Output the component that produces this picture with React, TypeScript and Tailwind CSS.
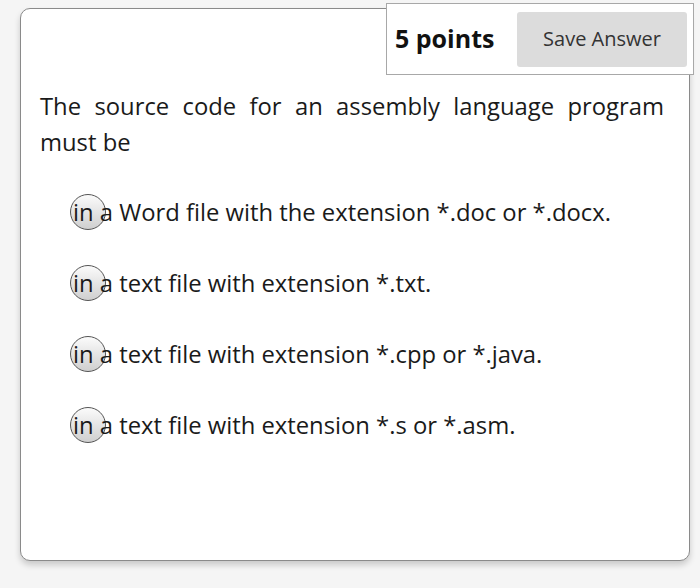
import React from 'react';

const options = [
  'in a Word file with the extension *.doc or *.docx.',
  'in a text file with extension *.txt.',
  'in a text file with extension *.cpp or *.java.',
  'in a text file with extension *.s or *.asm.',
];

function Option({ label }: { label: string }) {
  return (
    <label className="relative flex h-9 items-center pl-[3px]">
      <span className="absolute left-0 top-0 h-9 w-9 rounded-full border-[1.5px] border-[#555] bg-gradient-to-b from-[#fbfbfb] to-[#cfcfcf]" />
      <span className="relative text-[23.8px] leading-9 text-[#1a1a1a]">{label}</span>
    </label>
  );
}

export default function App() {
  return (
    <div
      className="relative h-[588px] w-[700px] overflow-hidden bg-[#f5f5f5]"
      style={{ fontFamily: '"Open Sans", "Noto Sans", sans-serif' }}
    >
      <div className="ml-5 mt-2 h-[553px] w-[670px] rounded-[10px] border-[1.5px] border-[#8a8a8a] bg-white shadow-[0_4px_6px_rgba(0,0,0,0.18)]">
        <p className="ml-[19px] mt-[79px] w-[624px] text-justify text-[23.8px] leading-9 text-[#1a1a1a] [text-align-last:left]">
          The source code for an assembly language program must be
        </p>
        <div className="ml-[49px] mt-[34px] flex flex-col gap-[35px]">
          {options.map((o) => (
            <Option key={o} label={o} />
          ))}
        </div>
      </div>

      <div className="absolute left-[386px] top-[3px] flex h-[72px] w-[308px] items-center border-[1.5px] border-[#a8a8a8] bg-white pl-2 pr-[6px]">
        <span className="text-[25px] font-bold text-[#111]">5 points</span>
        <button className="ml-auto flex h-[55px] w-[170px] items-center justify-center rounded-[3px] bg-[#dcdcdc] text-[20px] text-[#333]">
          Save Answer
        </button>
      </div>
    </div>
  );
}
